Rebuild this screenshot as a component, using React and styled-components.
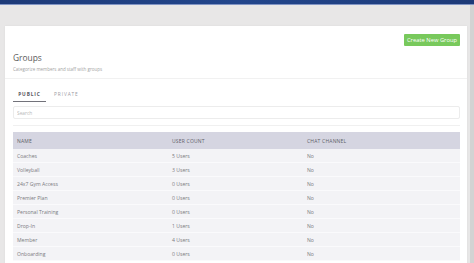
import React, { useState } from 'react';
import styled, { createGlobalStyle } from 'styled-components';

const GlobalStyle = createGlobalStyle`
  html, body {
    margin: 0;
    padding: 0;
    background: #e8e7e7;
    font-family: "Open Sans", "Liberation Sans", sans-serif;
    overflow: hidden;
  }
`;

const TopBar = styled.div`
  height: 4px;
  background: linear-gradient(90deg, #1d3a78, #22468c 50%, #1d3a78);
  border-bottom: 1px solid #8094c4;
`;

const Page = styled.div`
  display: flex;
  padding-top: 21px;
  height: 237px;
  overflow: hidden;
`;

const Content = styled.div`
  flex: 1;
  padding: 0 3px 0 5px;
`;

const Scrollbar = styled.div`
  width: 4px;
  background: #d3d3d3;
  margin-top: -21px;
`;

const Card = styled.div`
  background: #fff;
  padding: 8px 0 20px;
  box-shadow: 0 0 2px rgba(0, 0, 0, 0.06);
`;

const Section = styled.div`
  padding: 0 7px 0 8px;
`;

const ActionRow = styled.div`
  display: flex;
  justify-content: flex-end;
`;

const CreateButton = styled.button`
  height: 12px;
  width: 56px;
  padding: 0;
  border: none;
  border-radius: 1px;
  background: #78c95c;
  color: #fff;
  font-family: inherit;
  font-size: 5.8px;
  cursor: pointer;
`;

const Title = styled.div`
  margin-top: 7px;
  font-size: 8.4px;
  color: #5a5a5a;
  line-height: 10px;
`;

const Subtitle = styled.div`
  margin-top: 3px;
  font-size: 4.5px;
  color: #a3a3a3;
  line-height: 6px;
`;

const Divider = styled.div`
  height: 1px;
  background: #f1f1f1;
  margin-top: 6px;
`;

const Tabs = styled.div`
  display: flex;
  gap: 7px;
  margin-top: 11px;
`;

const Tab = styled.div`
  padding: 0 1px 3px;
  width: ${p => p.w}px;
  text-align: center;
  font-size: 4.8px;
  letter-spacing: 0.9px;
  font-weight: ${p => (p.active ? 700 : 400)};
  color: ${p => (p.active ? '#55555c' : '#9a9aa2')};
  border-bottom: 1.5px solid ${p => (p.active ? '#72727a' : 'transparent')};
  line-height: 8px;
  cursor: pointer;
`;

const SearchBox = styled.input`
  display: block;
  box-sizing: border-box;
  width: 100%;
  height: 13px;
  margin-top: 4px;
  padding: 0 3px;
  border: 1px solid #ececec;
  border-radius: 2px;
  font-family: inherit;
  font-size: 4.8px;
  color: #555;
  outline: none;
  &::placeholder {
    color: #b8b8b8;
  }
`;

const Rule = styled.div`
  height: 1px;
  background: #f0f0f0;
  margin-top: 6px;
`;

const Table = styled.div`
  margin-top: 6px;
`;

const HeadRow = styled.div`
  display: grid;
  grid-template-columns: 155px 135px 1fr;
  height: 17px;
  align-items: center;
  background: #d5d5e1;
  font-size: 5px;
  letter-spacing: 0.2px;
  color: #5f5f68;
  text-transform: uppercase;
  padding-left: 4px;
`;

const Row = styled.div`
  display: grid;
  grid-template-columns: 155px 135px 1fr;
  height: 13px;
  align-items: center;
  background: #f3f3f6;
  border-bottom: 1px solid #fafafc;
  font-size: 5.1px;
  color: #7a7a80;
  padding-left: 4px;
`;

const groups = [
  { name: 'Coaches', users: 5 },
  { name: 'Volleyball', users: 3 },
  { name: '24x7 Gym Access', users: 0 },
  { name: 'Premier Plan', users: 0 },
  { name: 'Personal Training', users: 0 },
  { name: 'Drop-In', users: 1 },
  { name: 'Member', users: 4 },
  { name: 'Onboarding', users: 0 },
];

const App = () => {
  const [tab, setTab] = useState('public');

  return (
    <>
      <GlobalStyle />
      <TopBar />
      <Page>
        <Content>
          <Card>
            <Section>
              <ActionRow>
                <CreateButton>Create New Group</CreateButton>
              </ActionRow>
              <Title>Groups</Title>
              <Subtitle>Categorize members and staff with groups</Subtitle>
            </Section>
            <Divider />
            <Section>
              <Tabs>
                <Tab w={31} active={tab === 'public'} onClick={() => setTab('public')}>PUBLIC</Tab>
                <Tab w={24} active={tab === 'private'} onClick={() => setTab('private')}>PRIVATE</Tab>
              </Tabs>
              <SearchBox placeholder="Search" />
              <Rule />
              <Table>
                <HeadRow>
                  <span>Name</span>
                  <span>User Count</span>
                  <span>Chat Channel</span>
                </HeadRow>
                {groups.map(g => (
                  <Row key={g.name}>
                    <span>{g.name}</span>
                    <span>{g.users} Users</span>
                    <span>No</span>
                  </Row>
                ))}
              </Table>
            </Section>
          </Card>
        </Content>
        <Scrollbar />
      </Page>
    </>
  );
};

export default App;
